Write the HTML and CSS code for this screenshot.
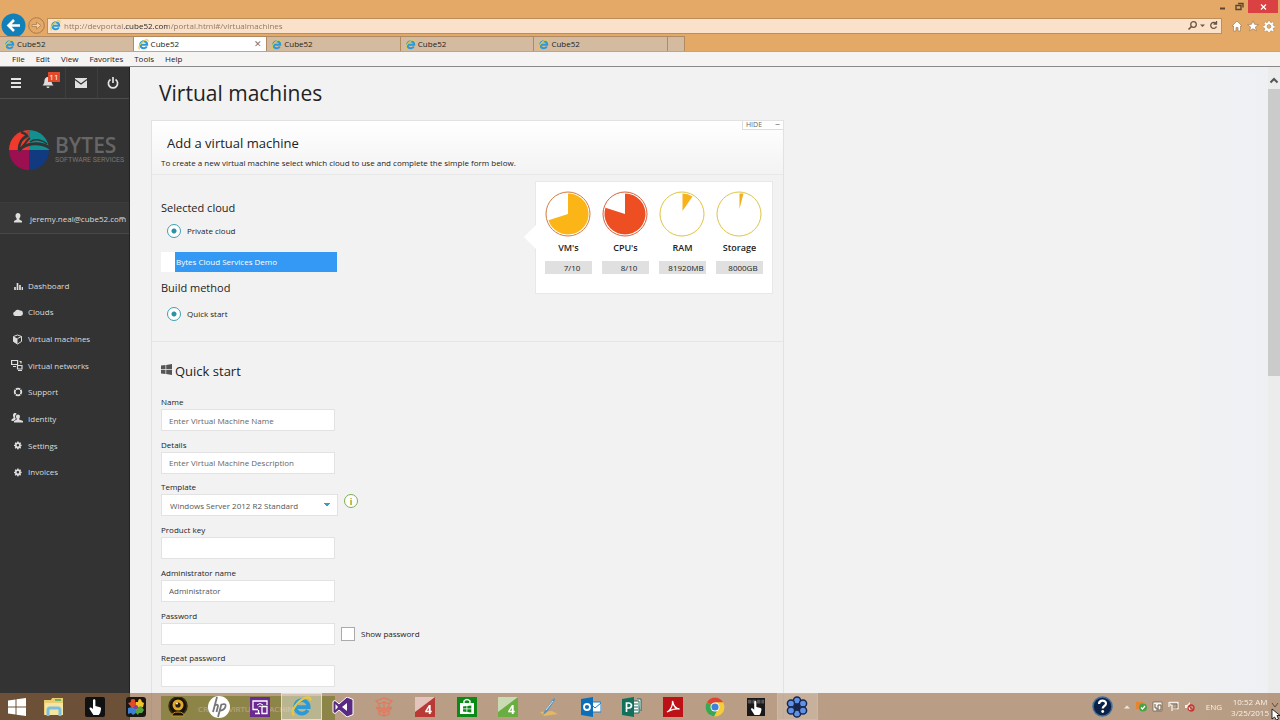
FILE: index.html
```html
<!DOCTYPE html>
<html lang="en">
<head>
  <meta charset="UTF-8">
  <meta name="viewport" content="width=device-width, initial-scale=1.0">
  <title>Cube52</title>
  <link rel="stylesheet" href="styles.css">
</head>
<body>

  <!-- Shared icons -->
  <svg class="defs" width="0" height="0">
    <symbol id="ie" viewBox="0 0 20 20">
      <path d="M16 13.500A6.400 6.400 0 1 1 16.800 10.500H6" fill="none" stroke="#2b9ad6" stroke-width="3.600"/>
      <path d="M3 18.500C-1 16.500 4 7 11 3c4-2.500 8-2.500 7.500 1.500" fill="none" stroke="#e9c93c" stroke-width="2"/>
    </symbol>
    <symbol id="cog" viewBox="0 0 16 16">
      <path fill-rule="evenodd" d="M6.700 1h2.600l.4 2 1.300.6 1.800-1.200 1.800 1.800-1.200 1.800.6 1.300 2 .4v2.600l-2 .4-.6 1.300 1.200 1.800-1.800 1.800-1.800-1.200-1.300.6-.4 2H6.700l-.4-2-1.300-.6-1.800 1.200-1.800-1.800 1.200-1.800-.6-1.300-2-.4V7.700l2-.4.6-1.300-1.200-1.800 1.800-1.800L5 3.600l1.300-.6zM8 6a2.600 2.600 0 1 0 0 5.200A2.600 2.600 0 0 0 8 6z"/>
    </symbol>
    <symbol id="hand" viewBox="0 0 20 20">
      <path fill="#fff" d="M8 3.500c0-1.600 2.400-1.600 2.400 0V9l4.600 1.200c1 .4 1.200 1 1 2l-.8 3.600-1.400 2.200H8.400L4.600 12c-.6-1.400.8-2 1.800-1.200L8 12z"/>
    </symbol>
  </svg>

  <!-- Browser -->
  <header class="browser">
    <div class="title-bar">
      <button class="win-btn" aria-label="Minimize"><svg width="12" height="12"><path d="M3 7.500h5" stroke="#5c4530" stroke-width="2"/></svg></button>
      <button class="win-btn" aria-label="Restore"><svg width="12" height="12"><path d="M2 4.500h5v4H2zM4 2.500h5v4" fill="none" stroke="#5c4530" stroke-width="1.400"/></svg></button>
      <button class="win-btn close" aria-label="Close"><svg width="12" height="12"><path d="M4 3.500l5 5M9 3.500l-5 5" stroke="#fff" stroke-width="1.300"/></svg></button>
    </div>
    <div class="nav-bar">
      <button class="back" aria-label="Back"><svg width="25" height="25" viewBox="0 0 25 25"><circle cx="12.500" cy="12.500" r="12" fill="#1180b8"/><path d="M19 12.500H8M13 7l-5.500 5.500L13 18" fill="none" stroke="#fff" stroke-width="2.600"/></svg></button>
      <button class="forward" aria-label="Forward"><svg width="17" height="17" viewBox="0 0 17 17"><circle cx="8.500" cy="8.500" r="7.800" fill="#e5a967" stroke="#a97a4b"/><path d="M4 7.500h4.500V5l4.500 3.500L8.500 12V9.500H4z" fill="#f3cfa6" stroke="#b98a5a"/></svg></button>
      <div class="address">
        <svg width="11" height="11"><use href="#ie"/></svg>
        <input type="text" class="url" aria-label="Address" value="http://devportal.cube52.com/portal.html#/virtualmachines">
        <button aria-label="Search"><svg width="11" height="11"><circle cx="6.500" cy="4.500" r="2.800" fill="none" stroke="#6d5540" stroke-width="1.300"/><path d="M4.500 6.500L1.500 9.500" stroke="#6d5540" stroke-width="1.600"/></svg></button>
        <button aria-label="Search options"><svg width="9" height="11"><path d="M2 4.500h5L4.500 7z" fill="#6d5540"/></svg></button>
        <button aria-label="Refresh"><svg width="13" height="11"><path d="M9 3.500A3 3 0 1 0 9.500 6.500M9.500 1v3h-3" fill="none" stroke="#6d5540" stroke-width="1.300"/></svg></button>
      </div>
      <div class="tools">
        <button aria-label="Home"><svg width="12" height="12"><path d="M6 1L1 6h1.500v5h2.500V7.500h2V11h2.500V6H11z" fill="#fff" stroke="#94704a" stroke-width=".6"/></svg></button>
        <button aria-label="Favorites"><svg width="12" height="12"><path d="M6 .8l1.500 3.500 3.900.3-3 2.400 1 3.800L6 8.800l-3.400 2 1-3.800-3-2.400 3.900-.3z" fill="#fff" stroke="#94704a" stroke-width=".6"/></svg></button>
        <button aria-label="Tools"><svg width="12" height="12" fill="#fff" stroke="#94704a" stroke-width=".6"><use href="#cog"/></svg></button>
      </div>
    </div>
    <div class="tabs">
      <a href="#" class="tab"><svg width="11" height="11"><use href="#ie"/></svg>Cube52</a>
      <a href="#" class="tab active"><svg width="11" height="11"><use href="#ie"/></svg>Cube52<span class="tab-close">✕</span></a>
      <a href="#" class="tab"><svg width="11" height="11"><use href="#ie"/></svg>Cube52</a>
      <a href="#" class="tab"><svg width="11" height="11"><use href="#ie"/></svg>Cube52</a>
      <a href="#" class="tab"><svg width="11" height="11"><use href="#ie"/></svg>Cube52</a>
      <button class="tab" aria-label="New tab"></button>
    </div>
    <nav class="menu-bar">
      <a href="#">File</a>
      <a href="#">Edit</a>
      <a href="#">View</a>
      <a href="#">Favorites</a>
      <a href="#">Tools</a>
      <a href="#">Help</a>
    </nav>
  </header>

  <div class="page">

    <!-- Sidebar -->
    <aside class="sidebar">
      <div class="quick-links">
        <button aria-label="Menu"><svg width="12" height="12"><path d="M1 2h10M1 6h10M1 10h10" stroke="#e4e4e4" stroke-width="2"/></svg></button>
        <button aria-label="Notifications"><svg width="12" height="13" fill="#ddd"><path d="M6 1c3 0 3.500 2.500 3.700 5 .1 1.500.8 2.300 1.800 3.500H.5C1.500 8.300 2.200 7.500 2.300 6 2.500 3.500 3 1 6 1zM4.500 10.500h3c0 2-3 2-3 0z"/></svg><span class="badge">11</span></button>
        <button aria-label="Messages"><svg width="12" height="10"><path d="M0 0h12v10H0z" fill="#e0e0e0"/><path d="M0 1.500l6 4.500 6-4.500" fill="none" stroke="#333" stroke-width="1.100"/></svg></button>
        <button aria-label="Log out"><svg width="12" height="12"><path d="M3.500 2.500a4.600 4.600 0 1 0 5 0M6 0v6" fill="none" stroke="#e4e4e4" stroke-width="1.700"/></svg></button>
      </div>

      <div class="logo">
        <svg width="42" height="42" viewBox="0 0 42 42">
          <path d="M21 21H1A20 20 0 0 1 21 1z" fill="#f23a2c"/>
          <path d="M21 21V1a20 20 0 0 1 20 20z" fill="#128f8f"/>
          <path d="M21 21h20a20 20 0 0 1-20 20z" fill="#123a80"/>
          <path d="M21 21v20A20 20 0 0 1 1 21z" fill="#9c1052"/>
          <path d="M19 1.200L22 1v8l-5 4c0-5 2-8 2-11.800z" fill="#a9483a"/>
          <path d="M11 21C11 14 14 9 19 7c-1-2-3-3-6-4" fill="none" stroke="#333" stroke-width="2.600"/>
          <path d="M12 20c4-3 7-9 10-11" fill="none" stroke="#333" stroke-width="2"/>
          <path d="M11 22c6-9 22-9 31-3" fill="none" stroke="#333" stroke-width="3"/>
          <path d="M22 13c5-4 13-2 17 2" fill="none" stroke="#333" stroke-width="1.400"/>
        </svg>
        <div class="logo-text">
          <strong>BYTES</strong>
          <span>SOFTWARE SERVICES</span>
        </div>
      </div>

      <a href="#" class="user">
        <svg width="10" height="10" fill="#ddd"><path d="M5 0c3 0 3 4 1.300 5.500v1L9 8v1.500H1V8l2.700-1.500v-1C2 4 2 0 5 0z"/></svg>
        <span>jeremy.neal@cube52.com</span>
        <i class="user-caret"></i>
      </a>

      <ul class="menu">
        <li><a href="#"><svg width="12" height="12"><path d="M4 11V8M6.500 11V4M9 11V6M11.500 11V8" stroke="#ddd" stroke-width="1.700"/></svg>Dashboard</a></li>
        <li><a href="#"><svg width="12" height="12"><path d="M4 10a2.300 2.300 0 0 1 0-4.500A3.200 3.200 0 0 1 9 4.600 2.700 2.700 0 0 1 9.500 10z" fill="#ddd"/></svg>Clouds</a></li>
        <li><a href="#"><svg width="12" height="12"><path d="M6.500 2l4 1.500v5l-4 2.500-4-2.500v-5z" fill="none" stroke="#ddd"/><path d="M2.500 3.500l4 2V11l-4-2.500z" fill="#ddd"/><path d="M6.500 5.500l4-2" stroke="#ddd"/></svg>Virtual machines</a></li>
        <li><a href="#"><svg width="12" height="12"><path d="M.6 1.500h6v4h-6zM6.500 6.500h4.500v3.500H6.500zM2 7.500h3M8.500 2.500h1.500V4.500M7 11.500h4" fill="none" stroke="#ddd" stroke-width="1.200"/></svg>Virtual networks</a></li>
        <li><a href="#"><svg width="12" height="12"><circle cx="7" cy="6" r="3.300" fill="none" stroke="#ddd" stroke-width="1.800"/><path d="M4 3l2 2M10 3l-2 2M4 9l2-2M10 9l-2-2" stroke="#333" stroke-width=".8"/></svg>Support</a></li>
        <li><a href="#"><svg width="12" height="12" fill="#ddd"><path d="M7 2.500c2.500 0 2.300 3 1.200 4.200v.8L12 9v1.500H3V9l2.800-1.500v-.8C4.700 5.500 4.500 2.500 7 2.500z"/><path d="M4 1c1 0 1.500.5 1.700 1C3.500 3 4 6 5 7L2.500 9H.5V7.500l2-1.500v-1C1.500 3.500 2 1 4 1z"/></svg>Identity</a></li>
        <li><a href="#"><svg class="cog" width="12" height="12" viewBox="-5 -2 20 20"><use href="#cog" width="13" height="16"/></svg>Settings</a></li>
        <li><a href="#"><svg class="cog" width="12" height="12" viewBox="-5 -2 20 20"><use href="#cog" width="13" height="16"/></svg>Invoices</a></li>
      </ul>
    </aside>

    <!-- Content -->
    <main class="content">
      <h1>Virtual machines</h1>
      <form class="panel">
        <header class="panel-header">
          <h2>Add a virtual machine</h2>
          <p>To create a new virtual machine select which cloud to use and complete the simple form below.</p>
          <button type="button" class="hide">HIDE <span>−</span></button>
        </header>

        <section class="cloud">
          <div class="cloud-options">
            <h3>Selected cloud</h3>
            <label class="radio"><input type="radio" name="cloud" checked>Private cloud</label>
            <select class="cloud-select" aria-label="Cloud">
              <option>Bytes Cloud Services Demo</option>
            </select>
            <h3>Build method</h3>
            <label class="radio build"><input type="radio" name="build" checked>Quick start</label>
          </div>
          <div class="usage">
            <div class="meter">
              <svg width="46" height="46"><circle cx="23" cy="23" r="22" fill="#fff" stroke="#cf7a42"/><path d="M23 23V2.500A20.500 20.500 0 1 1 3.500 29.300z" fill="#fbb516"/></svg>
              <strong>VM's</strong>
              <span>7/10</span>
            </div>
            <div class="meter">
              <svg width="46" height="46"><circle cx="23" cy="23" r="22" fill="#fff" stroke="#d8603a"/><path d="M23 23V2.500A20.500 20.500 0 1 1 3.500 16.700z" fill="#ee4f22"/></svg>
              <strong>CPU's</strong>
              <span>8/10</span>
            </div>
            <div class="meter">
              <svg width="46" height="46"><circle cx="23" cy="23" r="22" fill="#fff" stroke="#dfc443"/><path d="M23.500 20V2.500A18 18 0 0 1 33.500 5.500z" fill="#f8b21c"/></svg>
              <strong>RAM</strong>
              <span>81920MB</span>
            </div>
            <div class="meter">
              <svg width="46" height="46"><circle cx="23" cy="23" r="22" fill="#fff" stroke="#dfc443"/><path d="M23.500 18V2.500h4z" fill="#f0b021"/></svg>
              <strong>Storage</strong>
              <span>8000GB</span>
            </div>
          </div>
        </section>

        <section class="quick-start">
          <h2>
            <svg width="11" height="11" fill="#555"><path d="M0 1.500L4.500 1v4.200H0zM5.200.9L11 0v5.200H5.200zM0 5.900h4.500V10L0 9.500zM5.200 5.900H11V11l-5.800-.9z"/></svg>
            Quick start
          </h2>
          <div class="fields">
            <div class="field">
              <label for="name">Name</label>
              <input type="text" id="name" placeholder="Enter Virtual Machine Name">
            </div>
            <div class="field">
              <label for="details">Details</label>
              <input type="text" id="details" placeholder="Enter Virtual Machine Description">
            </div>
            <div class="field">
              <label for="template">Template</label>
              <select id="template">
                <option>Windows Server 2012 R2 Standard</option>
              </select>
              <button type="button" class="info" aria-label="Template info">i</button>
            </div>
            <div class="field">
              <label for="key">Product key</label>
              <input type="text" id="key">
            </div>
            <div class="field">
              <label for="admin">Administrator name</label>
              <input type="text" id="admin" value="Administrator">
            </div>
            <div class="field">
              <label for="password">Password</label>
              <input type="password" id="password">
              <label class="check"><input type="checkbox">Show password</label>
            </div>
            <div class="field">
              <label for="repeat">Repeat password</label>
              <input type="password" id="repeat">
            </div>
          </div>
          <button type="submit" class="create">CREATE VIRTUAL MACHINE</button>
        </section>
      </form>
    </main>

    <div class="scrollbar">
      <svg width="12" height="22"><path d="M2.500 15.500L6 12l3.500 3.500" fill="none" stroke="#555" stroke-width="2"/></svg>
      <div class="thumb"></div>
    </div>
  </div>

  <!-- Taskbar -->
  <footer class="taskbar">
    <button class="start" aria-label="Start"><svg width="18" height="18" viewBox="0 0 18 18" fill="#fff"><path d="M0 2.500l7.500-1v7H0zM8.500 1.300L18 0v8.500H8.500zM0 9.500h7.500v7L0 15.500zM8.500 9.500H18V18l-9.500-1.300z"/></svg></button>
    <div class="apps">
      <button aria-label="File Explorer"><svg width="22" height="20" viewBox="0 0 22 20"><path d="M1 3h7l1-2h11v17H1z" fill="#e9cd73"/><path d="M2 6h18v12H2z" fill="#f6e5a2"/><path d="M12 2h6v2h-6z" fill="#6cb464"/><path d="M5 19v-6q0-2 2-2h8q2 0 2 2v6" fill="none" stroke="#79bfe0" stroke-width="3"/></svg></button>
      <button aria-label="Touch"><svg width="20" height="20" viewBox="0 0 20 20"><rect width="20" height="20" rx="2" fill="#111"/><use href="#hand"/></svg></button>
      <button aria-label="Puzzle"><svg width="20" height="20" viewBox="0 0 20 20"><rect width="20" height="20" rx="3" fill="#1b1613"/><path d="M2 6l3-1q-1-3 2-3t2 3l2 1-1 4-4 1z" fill="#e34a28"/><path d="M10 5h2q0-4 3-2.500l1 2.500 2 1-1 4-4 1-3-2z" fill="#f5c32c"/><path d="M2 11l4-1 4 1v5l-3 2-2-2-3 1z" fill="#3d7fd0"/><path d="M10 11l5-2 3 4-2 3h-3l-1 2-2-2z" fill="#55a53c"/><circle cx="10" cy="10" r="2" fill="#8d3b9c"/></svg></button>
      <button aria-label="Webcam"><svg width="22" height="20" viewBox="0 0 22 20"><circle cx="11" cy="9" r="9" fill="#17130b" stroke="#3a2c10" stroke-width="1.500"/><path d="M5 19q0-4 6-4t6 4z" fill="#17130b" stroke="#c89322"/><circle cx="11" cy="8" r="5.500" fill="#e3a92b"/><circle cx="11" cy="8" r="2.600" fill="#2a2011"/><circle cx="10" cy="6.500" r="1" fill="#fff"/></svg></button>
      <button aria-label="HP"><svg width="22" height="22" viewBox="0 0 22 22"><circle cx="11" cy="11" r="11" fill="#fff"/><path d="M9 1L5 16M6.700 9.500q4-2 3.200 1L8.500 16M13.500 8L10 21M13.500 8.500q5-1.500 4 2t-5 4" fill="none" stroke="#777" stroke-width="1.800"/></svg></button>
      <button aria-label="Remote display"><svg width="20" height="20" viewBox="0 0 20 20"><path d="M0 0h20v20H0z" fill="#6c2a91"/><path d="M8 12.500H3V4h14v4M5 16.500h5M8.500 13v3M12 9.500h5v7h-5z" fill="none" stroke="#fff" stroke-width="1.300"/><path d="M7 8q3-3 6 0M8.500 10q1.500-2 3 0" fill="none" stroke="#fff"/></svg></button>
      <button class="open" aria-label="Internet Explorer"><svg width="21" height="21"><use href="#ie"/></svg></button>
      <button aria-label="Visual Studio"><svg width="22" height="20" viewBox="0 0 22 20"><path d="M15 0l6 2.500v15L15 20l-8-7-4 3.500-2-1v-11l2-1L7 7z" fill="#5a2a82" stroke="#fff"/><path d="M3.500 7v6L6 10zM15 6l-5 4 5 4z" fill="#fff"/></svg></button>
      <button aria-label="SQL Server"><svg width="20" height="20" viewBox="0 0 20 20" fill="none" stroke="#e2785d" stroke-width="1.200"><path d="M2 4l8-3 8 3-3 3-5-2-5 2zM5 7v3l5 2 5-2V7M10 5v7M2 10l8 4 8-4M2 10l2 3 6 3 6-3 2-3M5 14v3l5 2 5-2v-3M10 16v3"/></svg></button>
      <button aria-label="Red 4"><svg width="20" height="20" viewBox="0 0 20 20"><path d="M0 0h20v20H0z" fill="#b93a35"/><path d="M0 0h20L0 15z" fill="#e3c5bd"/><text x="10" y="17" class="four">4</text></svg></button>
      <button aria-label="Store"><svg width="20" height="20" viewBox="0 0 20 20"><path d="M0 0h20v20H0z" fill="#0b8a16"/><path d="M3 6h14v11H3z" fill="#fff"/><path d="M7 6V4q3-3 6 0v2" fill="none" stroke="#fff" stroke-width="1.400"/><path d="M6 9.500L9.500 9v2.500H6zM10.300 9l4-.6v3.100h-4zM6 12.200h3.500V15L6 14.500zM10.300 12.200h4v3.300l-4-.5z" fill="#0b8a16"/></svg></button>
      <button aria-label="Green 4"><svg width="20" height="20" viewBox="0 0 20 20"><path d="M0 0h20v20H0z" fill="#6aae41"/><path d="M0 0h20L0 15z" fill="#c8dbb4"/><text x="10" y="17" class="four">4</text></svg></button>
      <button aria-label="Notes"><svg width="20" height="20" viewBox="0 0 20 20"><path d="M1 15l12-1 6 3-14 2z" fill="#e2b866"/><path d="M5 15L14 2q2-2 2 1L8 15l-4 3z" fill="#5a94c0"/><path d="M7 13l7-9" stroke="#cfe3f0"/></svg></button>
      <button aria-label="Outlook"><svg width="20" height="20" viewBox="0 0 20 20"><path d="M10 5h10v10H10z" fill="#fff" stroke="#1b7dc2"/><path d="M11 8l3 3 6-5" fill="none" stroke="#1b7dc2"/><path d="M0 2l12-2v20L0 18z" fill="#0d6fb8"/><circle cx="6" cy="10" r="3" fill="none" stroke="#fff" stroke-width="1.800"/></svg></button>
      <button aria-label="Publisher"><svg width="20" height="20" viewBox="0 0 20 20"><path d="M10 4h7v12h-7zM15 2h4v12" fill="#fff" stroke="#1c6b5d"/><path d="M12 7h4M12 10h4M12 13h4" stroke="#1c6b5d"/><path d="M0 2l12-2v20L0 18z" fill="#12705d"/><path d="M4.500 15V6H7q2.500.5 2.500 2.500T7 11H4.500" fill="none" stroke="#fff" stroke-width="1.700"/></svg></button>
      <button aria-label="Acrobat"><svg width="20" height="20" viewBox="0 0 20 20"><path d="M0 0h20v20H0z" fill="#bd1118"/><path d="M4 15c4-2 6-7 5.500-11 1 5 3 8 7 8-4-.8-8 .5-12.500 3z" fill="none" stroke="#fff" stroke-width="1.300"/></svg></button>
      <button aria-label="Chrome"><svg width="20" height="20" viewBox="0 0 20 20"><circle cx="10" cy="10" r="9.500" fill="#f6cc38"/><path d="M10 10L1.800 5.200A9.500 9.500 0 0 1 18.200 5.200H10z" fill="#dc4437"/><path d="M1.800 5.200A9.500 9.500 0 0 0 9 19.500l4-7.500-3-2z" fill="#3aa757"/><circle cx="10" cy="10" r="4.500" fill="#fff"/><circle cx="10" cy="10" r="3.600" fill="#3f80d8"/></svg></button>
      <button aria-label="Touch keyboard"><svg width="18" height="18" viewBox="0 0 20 20"><path d="M0 0h20v20H0z" fill="#191919"/><path d="M1 2h4v4H1zM6 2h4v4H6zM11 2h4v4h-4zM16 2h3v4h-3z" fill="#555"/><use href="#hand" y="1"/></svg></button>
      <button class="running" aria-label="Flower"><svg width="22" height="22" viewBox="0 0 22 22" fill="#5f92e6" stroke="#16264d" stroke-width="1.500"><circle cx="11" cy="4.500" r="3.600"/><circle cx="11" cy="17.500" r="3.600"/><circle cx="5" cy="7.500" r="3.600"/><circle cx="17" cy="7.500" r="3.600"/><circle cx="5" cy="14.500" r="3.600"/><circle cx="17" cy="14.500" r="3.600"/><circle cx="11" cy="11" r="2.500" fill="#16264d"/></svg></button>
    </div>
    <div class="tray">
      <button aria-label="Help"><svg width="21" height="21" viewBox="0 0 21 21"><circle cx="10.500" cy="10.500" r="9.500" fill="#0c2246" stroke="#3e6ea5" stroke-width="1.500"/><path d="M7 8c0-4.500 7-4.500 7-.5 0 2.500-3.300 2.500-3.300 5" fill="none" stroke="#fff" stroke-width="2.200"/><circle cx="10.700" cy="15.500" r="1.400" fill="#fff"/></svg></button>
      <button aria-label="Show hidden icons"><svg width="8" height="10"><path d="M1 6.500L4 3.500l3 3z" fill="#f3e7da"/></svg></button>
      <button aria-label="Sync"><svg width="11" height="11"><path d="M0 1h7v7H0z" fill="#e58432"/><circle cx="7" cy="6.500" r="4" fill="#49a244"/><path d="M5 6.500l1.500 1.500L9 5" fill="none" stroke="#fff" stroke-width="1.200"/></svg></button>
      <button aria-label="Devices"><svg width="11" height="11"><path d="M1 1h9v9H1z" fill="#f7f3ee" stroke="#6a5b4c" stroke-width=".7"/><path d="M3 3v4h2v3M6 4h3v5H6z" fill="none" stroke="#6a5b4c"/></svg></button>
      <button aria-label="Network"><svg width="11" height="11"><path d="M1 1.500h9v6H5M1 1v5M2 4h2v6" fill="none" stroke="#f5eee6" stroke-width="1.300"/><path d="M3 3h6v4H5" fill="none" stroke="#6a5b4c" stroke-width=".7"/></svg></button>
      <button aria-label="Volume"><svg width="11" height="11"><path d="M1 4h2l3-3v9L3 7H1z" fill="#f5eee6"/><circle cx="7" cy="7" r="3" fill="none" stroke="#cf3030" stroke-width="1.300"/><path d="M5 5l4 4" stroke="#cf3030" stroke-width="1.300"/></svg></button>
      <span class="lang">ENG</span>
      <time class="clock"><span>10:52 AM</span><span>3/25/2015</span></time>
    </div>
    <svg class="cursor" width="10" height="20"><path d="M2 3l3 4 3-4" fill="none" stroke="#5d4c3d"/><path d="M2 9v10l2.500-2 2 3 2-1L7 15.500h3z" fill="#fff" stroke="#000" stroke-width=".8"/></svg>
  </footer>

</body>
</html>
```
FILE: styles.css
```css
/* General Styles */
* {
  box-sizing: border-box;
}

body {
  display: flex;
  flex-direction: column;
  height: 100vh;
  margin: 0;
  overflow: hidden;
  font-family: "Open Sans", "Noto Sans", sans-serif;
  font-size: 8px;
  color: #222;
  background-color: #f2f2f2;
}

button,
input,
select {
  font: inherit;
  color: inherit;
}

button {
  display: flex;
  align-items: center;
  justify-content: center;
  padding: 0;
  border: none;
  background: none;
  cursor: pointer;
}

a {
  color: inherit;
  text-decoration: none;
}

h1,
h2,
h3,
p {
  margin: 0;
  font-weight: 400;
}

svg {
  flex: none;
}

.defs {
  position: absolute;
}

/* Browser */
.browser {
  flex: none;
  background-color: #e5a967;
}

.title-bar {
  display: flex;
  justify-content: flex-end;
  height: 13px;
  padding-right: 2px;
}

.win-btn {
  width: 17px;
}

.win-btn.close {
  width: 30px;
  background-color: #d94143;
}

.nav-bar {
  display: flex;
  align-items: center;
  height: 23px;
  padding: 2px 5px 0 0;
}

.back {
  width: 26px;
}

.forward {
  width: 21px;
}

.address {
  display: flex;
  flex: 1;
  align-items: center;
  height: 16px;
  padding: 0 1px 0 2px;
  border: 1px solid #c08d57;
  background-color: #fae1ca;
}

.url {
  flex: 1;
  padding: 0 3px;
  border: none;
  background: linear-gradient(to right, #8a7462 62px, #222 62px, #222 107px, #8a7462 107px);
  background-clip: text;
  -webkit-background-clip: text;
  -webkit-text-fill-color: transparent;
}

.tools {
  display: flex;
  gap: 4px;
  margin-left: 9px;
}

.tabs {
  display: grid;
  grid-template-columns: repeat(5, 1fr) 17px;
  width: 685px;
  max-width: 100%;
  height: 15px;
}

.tab {
  display: flex;
  align-items: center;
  gap: 2px;
  padding: 0 4px;
  border: solid #b08a62;
  border-width: 1px 1px 0 0;
  line-height: 12px;
  background-color: #d4bb9f;
}

.tab.active {
  background-color: #fff;
}

.tab-close {
  margin-left: auto;
  font-size: 9px;
  color: #777;
}

.menu-bar {
  display: flex;
  gap: 11px;
  height: 16px;
  padding-left: 12px;
  border-top: 1px solid #c9a27a;
  border-bottom: 1px solid #8a8a8a;
  line-height: 14px;
  background-color: #f5f4f3;
}

/* Page */
.page {
  display: flex;
  flex: 1;
  min-height: 0;
}

/* Sidebar */
.sidebar {
  flex: none;
  width: 130px;
  color: #ddd;
  background-color: #333;
  border-right: 1px solid #222;
}

.quick-links {
  display: grid;
  grid-template-columns: repeat(4, 1fr);
  height: 32px;
  border-bottom: 1px solid #4c4c4c;
}

.quick-links button {
  position: relative;
}

.quick-links button + button + button {
  border-left: 1px solid #3e3e3e;
}

.badge {
  position: absolute;
  top: 5px;
  right: 5px;
  padding: 0 1px;
  line-height: 10px;
  color: #fff;
  background-color: #e2492b;
}

.logo {
  display: flex;
  align-items: center;
  gap: 5px;
  height: 101px;
  padding-left: 8px;
}

.logo-text {
  display: flex;
  flex-direction: column;
  color: #666;
}

.logo-text strong {
  font-size: 21px;
  font-weight: 600;
  line-height: 21px;
}

.logo-text span {
  font-family: "Liberation Sans Narrow", Roboto, sans-serif;
  font-size: 7px;
  line-height: 8px;
  color: #777;
}

.user {
  display: flex;
  align-items: center;
  gap: 7px;
  height: 32px;
  margin-top: 2px;
  padding-left: 13px;
  border-top: 1px solid #3c3c3c;
  border-bottom: 1px solid #484848;
  background-color: #383838;
  position: relative;
}

.user-caret {
  position: absolute;
  right: 4px;
  border: 3px solid transparent;
  border-top-color: #999;
  border-bottom: none;
}

.menu {
  display: grid;
  grid-template-rows: repeat(8, 1fr);
  height: 213px;
  margin: 38px 0 0;
  padding: 0 0 0 11px;
  list-style-type: none;
}

.menu a {
  display: flex;
  align-items: center;
  gap: 5px;
  height: 100%;
}

.menu .cog {
  fill: #ddd;
}

/* Content */
.content {
  display: grid;
  flex: 1;
  grid-template-columns: 17fr 13fr;
  align-content: start;
  padding-left: 21px;
  background: linear-gradient(to right, #f2f2f2 92%, #eef0f4);
}

h1 {
  grid-column: 1 / -1;
  padding-left: 8px;
  font-size: 21px;
  font-weight: 500;
  line-height: 53px;
}

.panel {
  border: 1px solid #e2e2e2;
  background-color: #f2f2f2;
}

.panel-header {
  position: relative;
  padding: 13px 9px 4px;
  border-bottom: 1px solid #e8e8e8;
  background: linear-gradient(#fff, #f3f3f3);
}

.panel-header h2 {
  padding-left: 6px;
  font-size: 13px;
  line-height: 18px;
}

.panel-header p {
  margin-top: 4px;
  line-height: 14px;
}

.hide {
  position: absolute;
  top: 0;
  right: 0;
  justify-content: space-between;
  width: 41px;
  height: 9px;
  padding: 0 3px;
  border: solid #ddd;
  border-width: 0 0 1px 1px;
  font-size: 7px;
  line-height: 8px;
  color: #666;
  background-color: #fff;
}

.hide span {
  font-size: 9px;
}

.cloud {
  display: flex;
  justify-content: space-between;
  align-items: flex-start;
  padding: 0 10px 20px 9px;
  border-bottom: 1px solid #e6e6e6;
}

.cloud-options {
  padding-top: 25px;
}

.cloud h3 {
  font-size: 11px;
  line-height: 16px;
}

.radio {
  display: flex;
  align-items: center;
  gap: 6px;
  height: 14px;
  margin: 8px 0 14px 6px;
  line-height: 12px;
}

.radio.build {
  margin: 11px 0 0 6px;
}

.radio input {
  appearance: none;
  width: 14px;
  height: 14px;
  margin: 0;
  border: 1px solid #3d9fb0;
  border-radius: 50%;
  background: radial-gradient(#2f8fa3 2px, #fff 3px);
}

.cloud-select {
  appearance: none;
  display: block;
  width: 176px;
  height: 20px;
  margin-bottom: 8px;
  padding: 0 15px 1px;
  border: none;
  border-radius: 0;
  color: #fff;
  background: linear-gradient(to right, #fff 14px, #3399f5 14px);
}

.usage {
  position: relative;
  display: flex;
  gap: 10px;
  height: 113px;
  margin-top: 6px;
  padding: 9px;
  border: 1px solid #e8e8e8;
  background-color: #fff;
}

.usage::before {
  content: "";
  position: absolute;
  left: -12px;
  top: 43px;
  border: 12px solid transparent;
  border-right-color: #fff;
  border-left: none;
}

.meter {
  display: flex;
  flex-direction: column;
  align-items: center;
  width: 47px;
}

.meter strong {
  font-size: 9px;
  font-weight: 600;
  line-height: 22px;
}

.meter span {
  align-self: stretch;
  margin-top: 2px;
  padding-left: 7px;
  line-height: 13px;
  text-align: center;
  background-color: #e0e0e0;
}

.quick-start {
  padding: 20px 9px;
}

.quick-start h2 {
  display: flex;
  gap: 3px;
  font-size: 13px;
  line-height: 18px;
}

.quick-start h2 svg {
  margin-top: 2px;
}

.fields {
  display: grid;
  grid-template-rows: repeat(7, 1fr);
  height: 299px;
  margin-top: 15px;
}

.field {
  display: flex;
  flex-wrap: wrap;
  align-content: flex-start;
  align-items: center;
  column-gap: 6px;
}

.field > label:first-child {
  width: 100%;
  line-height: 14px;
}

.field > input,
.field select {
  width: 174px;
  height: 22px;
  padding: 0 7px;
  border: 1px solid #e2e2e2;
  border-radius: 0;
  color: #555;
  background-color: #fff;
}

.field > input::placeholder {
  color: #666;
  opacity: 1;
}

.field select {
  appearance: none;
  width: 177px;
  padding: 0 8px;
  background: linear-gradient(to bottom left, #3c9cc0 50%, transparent 50%) 162px 8px / 3px 4px no-repeat, linear-gradient(to bottom right, #3c9cc0 50%, transparent 50%) 165px 8px / 3px 4px no-repeat, #fff;
}

.info {
  align-self: flex-start;
  width: 14px;
  height: 14px;
  border: 1px solid #7ab04c;
  border-radius: 50%;
  font-weight: 700;
  color: #69a238;
  background-color: #fff;
}

.check {
  display: flex;
  align-items: center;
  gap: 6px;
}

.check input {
  appearance: none;
  width: 14px;
  height: 14px;
  margin: 0;
  border: 1px solid #aaa;
  background-color: #fff;
}

.create {
  width: 174px;
  height: 24px;
  margin-top: 2px;
  color: #fff;
  background-color: #84b457;
}

.scrollbar {
  flex: none;
  width: 12px;
  background-color: #ececec;
}

.scrollbar svg {
  display: block;
}

.thumb {
  height: 44%;
  background-color: #cbcbcb;
}

/* Taskbar */
.taskbar {
  position: fixed;
  left: 0;
  right: 0;
  bottom: 0;
  display: flex;
  height: 27px;
  color: #f7efe6;
  background-color: rgba(147, 102, 60, 0.6);
}

.start {
  width: 33px;
}

.apps {
  display: grid;
  grid-template-columns: repeat(19, 1fr);
  width: 785px;
}

.apps .open {
  border: 1px solid #e6dcc8;
  background-color: rgba(255, 255, 255, 0.4);
}

.apps .running {
  border: 1px solid #cbb9a5;
  background-color: rgba(255, 255, 255, 0.2);
}

.four {
  font-size: 12px;
  font-weight: 700;
  fill: #fff;
}

.tray {
  display: flex;
  align-items: center;
  gap: 5px;
  margin-left: auto;
  padding-right: 11px;
}

.tray button:first-child {
  margin-right: 5px;
}

.lang {
  margin-left: 6px;
}

.clock {
  display: flex;
  flex-direction: column;
  margin-left: 4px;
  text-align: center;
  line-height: 11px;
}

.cursor {
  position: absolute;
  right: 0;
  bottom: 0;
}
```
